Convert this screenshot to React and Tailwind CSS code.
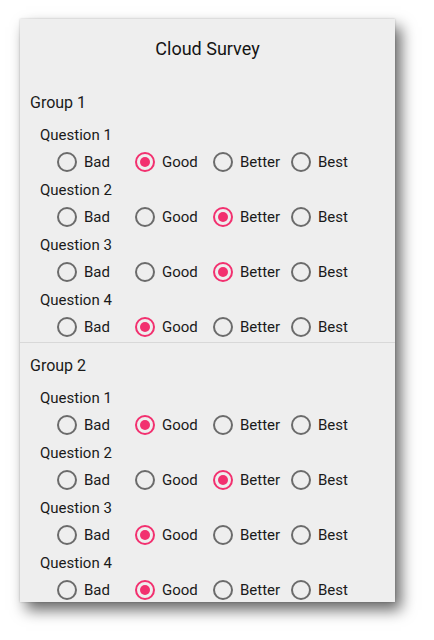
const groups = [
  { name: 'Group 1', answers: [1, 2, 2, 1] },
  { name: 'Group 2', answers: [1, 2, 1, 1] },
];

const options = ['Bad', 'Good', 'Better', 'Best'];

function Radio({ checked, label }) {
  return (
    <div className="flex items-center w-[78px]">
      {checked ? (
        <span className="w-5 h-5 rounded-full border-2 border-[#f2306f] flex items-center justify-center">
          <span className="w-[10px] h-[10px] rounded-full bg-[#f2306f]" />
        </span>
      ) : (
        <span className="w-5 h-5 rounded-full border-2 border-[#6b6b6b]" />
      )}
      <span className="ml-[7px] pt-[2px] text-[15px] leading-none text-[#1a1a1a]">{label}</span>
    </div>
  );
}

function Question({ index, answer }) {
  return (
    <div>
      <div className="h-6 pl-5 pt-[2px] flex items-center text-[15px] text-[#1a1a1a]">Question {index}</div>
      <div className="h-[31px] pl-[37px] flex items-center">
        {options.map((o, i) => (
          <Radio key={o} label={o} checked={i === answer} />
        ))}
      </div>
    </div>
  );
}

function Group({ group, last }) {
  return (
    <div className={last ? '' : 'border-b border-[#d8d8d8]'}>
      <div className="pt-[10px] h-[34px] pl-[10px] flex items-end">
        <span className="h-6 pt-[2px] flex items-center text-[16px] text-[#1a1a1a]">{group.name}</span>
      </div>
      <div className="mt-2">
        {group.answers.map((a, i) => (
          <Question key={i} index={i + 1} answer={a} />
        ))}
      </div>
    </div>
  );
}

export default function App() {
  return (
    <div className="w-[434px] h-[640px] bg-white pt-[19px] pl-[20px]" style={{ fontFamily: 'Roboto, "Noto Sans", sans-serif' }}>
      <div className="w-[375px] h-[583px] overflow-hidden bg-[#eeeeee] shadow-[0_0_2px_rgba(0,0,0,0.2),6px_8px_14px_rgba(0,0,0,0.6)]">
        <div className="pt-[17px] pb-[20px] h-[61px]">
          <h1 className="h-6 flex items-center justify-center text-[18px] text-[#141414]">Cloud Survey</h1>
        </div>
        {groups.map((g, i) => (
          <Group key={g.name} group={g} last={i === groups.length - 1} />
        ))}
      </div>
    </div>
  );
}
